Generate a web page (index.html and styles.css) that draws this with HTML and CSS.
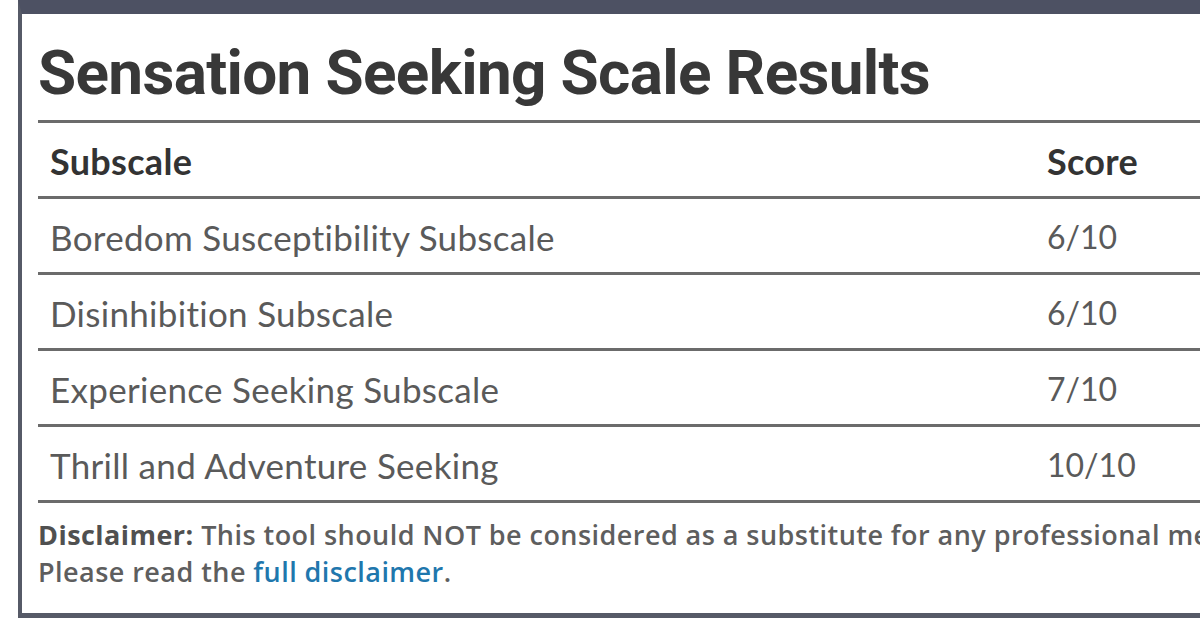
FILE: index.html
```html
<!DOCTYPE html>
<html lang="en">
<head>
<meta charset="utf-8">
<title>Sensation Seeking Scale Results</title>
<link rel="stylesheet" href="styles.css">
</head>
<body>
<div class="page">
  <section class="card">
    <h1 class="title">Sensation Seeking Scale Results</h1>
    <table class="results">
      <thead>
        <tr><th class="col-name">Subscale</th><th class="col-score">Score</th></tr>
      </thead>
      <tbody>
        <tr><td>Boredom Susceptibility Subscale</td><td class="score">6/10</td></tr>
        <tr><td>Disinhibition Subscale</td><td class="score">6/10</td></tr>
        <tr><td>Experience Seeking Subscale</td><td class="score">7/10</td></tr>
        <tr><td>Thrill and Adventure Seeking</td><td class="score">10/10</td></tr>
      </tbody>
    </table>
    <p class="disclaimer"><strong>Disclaimer:</strong> This tool should NOT be considered as a substitute for any professional medical service, nor as a substitute for clinical judgement.<br>Please read the <a href="#" class="link">full disclaimer</a>.</p>
  </section>
</div>
</body>
</html>
```

FILE: styles.css
```css
html, body {
  margin: 0;
  padding: 0;
  background: #ffffff;
  overflow: hidden;
  width: 1200px;
  height: 630px;
}
.page {
  padding-left: 18px;
  width: 1400px;
}
.card {
  width: 1360px;
  border-top: 14px solid #4d5163;
  border-left: 4px solid #565a67;
  border-bottom: 5px solid #565a67;
  background: #ffffff;
  padding: 0 0 0 16px;
  box-sizing: border-box;
  height: 618px;
  overflow: hidden;
}
.title {
  margin: 22px 0 0 0;
  font-family: Roboto, "Liberation Sans", sans-serif;
  font-weight: 700;
  font-size: 62px;
  line-height: 74px;
  color: #383838;
  letter-spacing: -0.65px;
  padding-bottom: 10px;
  border-bottom: 3px solid #6b6b6b;
  white-space: nowrap;
}
.results {
  border-collapse: collapse;
  width: 1300px;
  font-family: Lato, "Open Sans", sans-serif;
  font-size: 35px;
  letter-spacing: 0.3px;
}
.results th, .results td {
  text-align: left;
  padding: 18px 12px 15px 12px;
  line-height: 40px;
  border-bottom: 3px solid #6b6b6b;
  white-space: nowrap;
}
.results th {
  font-weight: 700;
  font-size: 36px;
  letter-spacing: 0.3px;
  color: #333333;
}
.results td {
  color: #5a5a5a;
}
.results .score {
  font-size: 32px;
  letter-spacing: 0;
}
.col-name {
  width: 973px;
}
.disclaimer {
  margin: 13px 0 0 0;
  font-family: "Open Sans", "Noto Sans", sans-serif;
  font-weight: 600;
  font-size: 27px;
  line-height: 37px;
  letter-spacing: 0.45px;
  color: #5e5e5e;
  white-space: nowrap;
}
.disclaimer strong {
  font-weight: 700;
  color: #505050;
}
.link {
  color: #1f77ad;
  text-decoration: none;
}
```
